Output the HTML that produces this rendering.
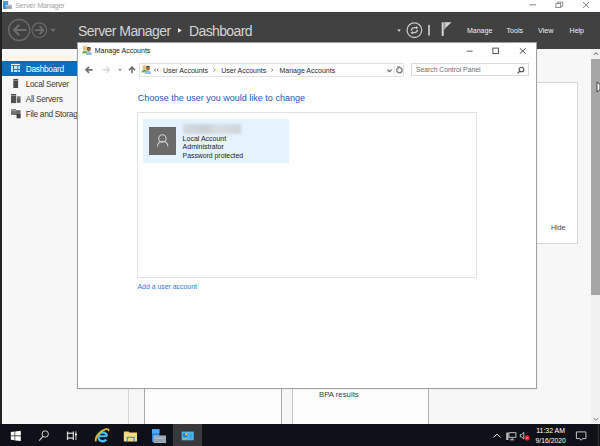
<!DOCTYPE html>
<html><head><meta charset="utf-8">
<style>
*{box-sizing:border-box}
html,body{margin:0;padding:0}
body{width:600px;height:446px;overflow:hidden;position:relative;background:#f7f7f7;font-family:"Liberation Sans",sans-serif;color:#222}
.a{position:absolute}
.t{position:absolute;white-space:nowrap;line-height:1.117}
svg{position:absolute;overflow:visible}
</style></head><body>

<!-- left dark edge -->
<div class="a" style="left:0;top:0;width:2px;height:424px;background:#232323"></div>
<div class="a" style="left:2px;top:11px;width:1px;height:413px;background:#fff"></div>

<!-- server manager title bar -->
<div class="a" style="left:2px;top:0;width:598px;height:11.5px;background:#fff"></div>
<svg style="left:0;top:0" width="16" height="12">
  <rect x="3.2" y="1" width="4.9" height="8" fill="#1f80de"/>
  <rect x="3.2" y="1" width="4.9" height="3" fill="#4a9be8"/>
  <rect x="5.2" y="4.8" width="6.6" height="4.1" fill="#8ea3b6"/>
  <rect x="5.2" y="4.8" width="6.6" height="1.3" fill="#c3ccd4"/>
</svg>
<div class="t" style="left:15.2px;top:1.6px;font-size:7.3px;color:#a3a3a3;letter-spacing:-0.22px">Server Manager</div>
<svg style="left:520px;top:0" width="80" height="12">
  <line x1="9.3" y1="4.8" x2="16" y2="4.8" stroke="#777" stroke-width="0.9"/>
  <rect x="35.9" y="3.4" width="4.8" height="4.2" fill="none" stroke="#777" stroke-width="0.8"/>
  <path d="M37.3 3.4 V2.1 H42.7 V6.3 H40.7" fill="none" stroke="#777" stroke-width="0.8"/>
  <path d="M63 2 L69 7.8 M69 2 L63 7.8" stroke="#777" stroke-width="0.9"/>
</svg>

<!-- header -->
<div class="a" style="left:2px;top:11.5px;width:598px;height:37px;background:#414141"></div>
<svg style="left:0;top:12px" width="70" height="36">
  <circle cx="19.2" cy="18" r="10.5" fill="none" stroke="#6a6a6a" stroke-width="1.35"/>
  <path d="M14 18 H26.4 M19.2 12.8 L14 18 L19.2 23.2" fill="none" stroke="#6e6e6e" stroke-width="2"/>
  <circle cx="39.3" cy="18.2" r="7.3" fill="none" stroke="#6a6a6a" stroke-width="1.2"/>
  <path d="M34.6 18.2 H43 M39.6 14.2 L43.4 18.2 L39.6 22.2" fill="none" stroke="#6e6e6e" stroke-width="1.7"/>
  <path d="M50 16.8 H56 L53 20 Z" fill="#6c6c6c"/>
</svg>
<div class="t" style="left:78px;top:24.1px;font-size:14px;color:#d4d4d4;letter-spacing:-0.55px">Server Manager</div>
<svg style="left:170px;top:20px" width="20" height="20">
  <path d="M8 8 L11.8 10.4 L8 12.8 Z" fill="#e8e8e8"/>
</svg>
<div class="t" style="left:189px;top:24.1px;font-size:14px;color:#d4d4d4;letter-spacing:-0.62px">Dashboard</div>

<svg style="left:390px;top:12px" width="70" height="36">
  <path d="M7.2 17.4 H10.8 L9 19.8 Z" fill="#e0e0e0"/>
  <circle cx="24.4" cy="18.2" r="7.3" fill="none" stroke="#c4c4c4" stroke-width="1.3"/>
  <path d="M21.2 18.6 C21.6 16.6 23 15.7 25 15.7 H26.4 M27.6 17.8 C27.2 19.8 25.8 20.7 23.8 20.7 H22.4" fill="none" stroke="#c8c8c8" stroke-width="1.3"/>
  <path d="M25.9 13.9 L28.3 15.7 L25.9 17.5 Z M22.9 18.9 L20.5 20.7 L22.9 22.5 Z" fill="#c8c8c8"/>
  <rect x="38.1" y="12.9" width="1.8" height="10.6" fill="#c4c4c4"/>
  <rect x="51.7" y="10.3" width="2" height="13.6" fill="#d4d4d4"/>
  <path d="M53.7 10.3 H61.5 L53.7 17.8 Z" fill="#d4d4d4"/>
  <rect x="53.7" y="10.3" width="1.6" height="7" fill="#9a9a9a"/>
</svg>

<!-- header menu -->
<div class="t" style="left:467px;top:27.2px;font-size:7px;color:#f2f2f2">Manage</div>
<div class="t" style="left:506.6px;top:27.2px;font-size:7px;color:#f2f2f2">Tools</div>
<div class="t" style="left:538px;top:27.2px;font-size:7.2px;color:#f2f2f2">View</div>
<div class="t" style="left:569.6px;top:27.2px;font-size:7px;color:#f2f2f2">Help</div>

<!-- nav -->
<div class="a" style="left:2px;top:60.8px;width:76px;height:14.8px;background:#0a6ebd"></div>
<svg style="left:0;top:60px" width="26" height="60">
  <rect x="11" y="3.9" width="9" height="1.3" fill="#fff"/>
  <g fill="#cfe0f2">
  <rect x="11" y="6" width="2.1" height="6"/>
  <rect x="14" y="6" width="3.4" height="3.1"/><rect x="14" y="10" width="3.4" height="2"/>
  <rect x="18.2" y="6" width="1.8" height="3.1"/><rect x="18.2" y="10" width="1.8" height="2"/>
  </g>
  <!-- local server -->
  <rect x="13.3" y="18.9" width="4.8" height="9.1" fill="#4a4a4a"/>
  <rect x="13.3" y="20" width="4.8" height="0.8" fill="#9a9a9a"/>
  <!-- all servers -->
  <rect x="11" y="34" width="5.1" height="9.1" fill="#505050"/>
  <rect x="11" y="35.2" width="5.1" height="0.8" fill="#a0a0a0"/>
  <rect x="16.8" y="36.4" width="3.7" height="6.4" fill="#5a5a5a"/>
  <rect x="16.8" y="37.6" width="3.7" height="0.7" fill="#a8a8a8"/>
  <!-- file and storage -->
  <rect x="11" y="49.2" width="5" height="5.8" fill="#707070"/>
  <rect x="11" y="50.4" width="5" height="0.8" fill="#b0b0b0"/>
  <rect x="16" y="50.2" width="4.5" height="5" fill="#6a6a6a"/>
  <rect x="16.6" y="54" width="4" height="4.3" fill="#404040"/>
</svg>
<div class="t" style="left:25.7px;top:64.7px;font-size:8.3px;letter-spacing:-0.27px;color:#fff">Dashboard</div>
<div class="t" style="left:25.7px;top:79.9px;font-size:8.3px;letter-spacing:-0.3px;color:#3a3a3a">Local Server</div>
<div class="t" style="left:25.7px;top:95.2px;font-size:8.3px;letter-spacing:-0.3px;color:#3a3a3a">All Servers</div>
<div class="t" style="left:25.7px;top:110.3px;font-size:8.3px;letter-spacing:-0.3px;color:#3a3a3a">File and Storage Services</div>

<!-- right content panel -->
<div class="a" style="left:128px;top:81.5px;width:450px;height:162.7px;background:#fff;border:1px solid #d6d6d6"></div>
<div class="t" style="left:551px;top:224.4px;font-size:7px;color:#444">Hide</div>

<!-- bottom tiles -->
<div class="a" style="left:128px;top:380px;width:1px;height:44px;background:#d4d4d4"></div>
<div class="a" style="left:129px;top:380px;width:15px;height:44px;background:#f6f6f6"></div>
<div class="a" style="left:144px;top:380px;width:138px;height:44px;background:#fcfcfc;border-left:1px solid #a8a8a8;border-right:1px solid #a8a8a8"></div>
<div class="a" style="left:282px;top:380px;width:10px;height:44px;background:#f6f6f6"></div>
<div class="a" style="left:292px;top:380px;width:137px;height:44px;background:#fcfcfc;border-left:1px solid #c8c8c8;border-right:1px solid #b0b0b0"></div>
<div class="t" style="left:319px;top:390.5px;font-size:7.8px;color:#444">BPA results</div>

<!-- scrollbar -->
<div class="a" style="left:590.5px;top:48.5px;width:9.5px;height:375.5px;background:#f0f0f0"></div>
<div class="a" style="left:590.5px;top:59px;width:9.5px;height:235.8px;background:#a6a6a6"></div>
<svg style="left:586px;top:46px" width="14" height="380">
  <path d="M7.8 8.9 L9.9 6.6 L12 8.9" fill="none" stroke="#606060" stroke-width="1"/>
  <path d="M7.6 372 L9.8 374.4 L12 372" fill="none" stroke="#808080" stroke-width="1"/>
  <path d="M11 36 L14 38.5 V43.5 L11 46 Z" fill="#fff" stroke="#333" stroke-width="0.9"/>
</svg>

<!-- dialog -->
<div class="a" style="left:77px;top:42px;width:460px;height:347px;background:#fff;border:1px solid #a2a2a2;box-shadow:0 0 1px rgba(0,0,0,.2)"></div>
<svg style="left:80px;top:43px" width="16" height="14">
  <path d="M2.1 10.6 Q2.2 7.5 5 7.4 Q7.8 7.5 7.9 10.6 Z" fill="#74b257"/>
  <ellipse cx="5" cy="5.2" rx="2.1" ry="2.4" fill="#e6c28c"/>
  <path d="M2.9 5 Q2.8 2.6 5 2.6 Q7.2 2.6 7.1 5 Q6.6 3.9 5 3.9 Q3.4 3.9 2.9 5 Z" fill="#dccf86"/>
  <path d="M5.9 12.1 Q6 8.7 8.9 8.6 Q11.8 8.7 11.9 12.1 Z" fill="#8fbee9"/>
  <ellipse cx="8.8" cy="6.3" rx="2" ry="2.3" fill="#a46c38"/>
  <path d="M6.8 6.1 Q6.7 3.8 8.8 3.8 Q10.9 3.8 10.8 6.1 Q10.3 5 8.8 5 Q7.3 5 6.8 6.1 Z" fill="#474747"/>
</svg>
<div class="t" style="left:94.7px;top:47px;font-size:7px;color:#222">Manage Accounts</div>
<svg style="left:455px;top:38px" width="90" height="22">
  <line x1="11.7" y1="13.2" x2="17.7" y2="13.2" stroke="#555" stroke-width="0.9"/>
  <rect x="37.9" y="10.1" width="5.5" height="5.5" fill="none" stroke="#444" stroke-width="0.9"/>
  <path d="M64.8 10.2 L70.8 15.7 M70.8 10.2 L64.8 15.7" stroke="#444" stroke-width="0.9"/>
</svg>

<!-- nav row -->
<svg style="left:80px;top:60px" width="80" height="20">
  <path d="M6 9.8 H12.7 M9 6.8 L6 9.8 L9 12.8" fill="none" stroke="#707070" stroke-width="1.7"/>
  <path d="M22.7 9.8 H29.4 M26.4 6.8 L29.4 9.8 L26.4 12.8" fill="none" stroke="#dadada" stroke-width="1.6"/>
  <path d="M38.5 9 L40.1 10.5 L41.7 9" fill="none" stroke="#5a5a5a" stroke-width="1"/>
  <path d="M52 7.2 V13.3 M48.9 10.2 L52 7.1 L55.1 10.2" fill="none" stroke="#686868" stroke-width="1.5"/>
</svg>

<!-- address bar -->
<div class="a" style="left:139px;top:63.2px;width:265px;height:13.4px;border:1px solid #e2e2e2"></div>
<div class="a" style="left:393.5px;top:63.2px;width:1px;height:13.4px;background:#eaeaea"></div>
<svg style="left:140px;top:63px" width="20" height="14">
  <path d="M1.6 9.4 Q1.7 6.4 4.5 6.3 Q7.2 6.4 7.4 9.4 Z" fill="#74b257"/>
  <ellipse cx="4.5" cy="4.2" rx="2" ry="2.3" fill="#e6c28c"/>
  <path d="M2.5 4 Q2.4 1.7 4.5 1.7 Q6.6 1.7 6.5 4 Q6 2.9 4.5 2.9 Q3 2.9 2.5 4 Z" fill="#dccf86"/>
  <path d="M5.2 10.9 Q5.3 7.5 8.1 7.4 Q10.9 7.5 11 10.9 Z" fill="#8fbee9"/>
  <ellipse cx="8" cy="5.2" rx="1.9" ry="2.2" fill="#a46c38"/>
  <path d="M6.1 5 Q6 2.8 8 2.8 Q10 2.8 9.9 5 Q9.4 4 8 4 Q6.6 4 6.1 5 Z" fill="#474747"/>
  <path d="M15.9 5.7 L14.4 7 L15.9 8.3 M18.4 5.7 L16.9 7 L18.4 8.3" fill="none" stroke="#6a6a6a" stroke-width="0.9"/>
</svg>
<div class="t" style="left:162.9px;top:66.5px;font-size:7px;color:#2a2a2a">User Accounts</div>
<svg style="left:205px;top:63px" width="80" height="14">
  <path d="M8.5 5.5 L10.3 7 L8.5 8.5" fill="none" stroke="#777" stroke-width="0.8"/>
  <path d="M66.2 5.5 L68 7 L66.2 8.5" fill="none" stroke="#777" stroke-width="0.8"/>
</svg>
<div class="t" style="left:221.2px;top:66.5px;font-size:7px;color:#2a2a2a">User Accounts</div>
<div class="t" style="left:279.5px;top:66.5px;font-size:7px;color:#2a2a2a">Manage Accounts</div>
<svg style="left:380px;top:60px" width="30" height="20">
  <path d="M7.4 9.6 L9.5 11.7 L11.6 9.6" fill="none" stroke="#666" stroke-width="1.3"/>
  <path d="M17.6 8.2 A2.7 2.7 0 1 0 20.2 7.6" fill="none" stroke="#777" stroke-width="1.3"/>
  <path d="M17 6.2 L20.4 6.6 L18.6 9.4 Z" fill="#777"/>
</svg>

<!-- search -->
<div class="a" style="left:411.3px;top:63.3px;width:117.3px;height:12.8px;border:1px solid #dadada"></div>
<div class="t" style="left:415.9px;top:66px;font-size:6.8px;color:#6d6d6d">Search Control Panel</div>
<svg style="left:505px;top:60px" width="30" height="20">
  <circle cx="16.5" cy="9.5" r="2.3" fill="none" stroke="#555" stroke-width="1.1"/>
  <path d="M14.8 11.2 L12.5 13.4" stroke="#555" stroke-width="1.3"/>
</svg>

<!-- heading -->
<div class="t" style="left:137.8px;top:92.9px;font-size:9px;color:#2457be">Choose the user you would like to change</div>

<!-- users box -->
<div class="a" style="left:137px;top:112px;width:340px;height:166px;border:1px solid #e3e3e3"></div>
<div class="a" style="left:142.8px;top:118.6px;width:146.2px;height:44.4px;background:#e5f3ff"></div>
<div class="a" style="left:148.6px;top:126.7px;width:27.9px;height:28.2px;background:#6a6a6a"></div>
<svg style="left:146px;top:124px" width="34" height="34">
  <circle cx="16.4" cy="14.4" r="3.7" fill="none" stroke="#d0d0d0" stroke-width="1.1"/>
  <path d="M11.5 22.4 A5.1 5.1 0 0 1 21.9 22.4" fill="none" stroke="#d0d0d0" stroke-width="1.1"/>
</svg>
<div class="a" style="left:183px;top:123.5px;width:58px;height:10px;background:linear-gradient(90deg,#d4dadf,#cbd1d7 40%,#d8dde2 60%,#ced4da);filter:blur(1.6px)"></div>
<div class="t" style="left:182.6px;top:134.8px;font-size:7px;color:#222">Local Account</div>
<div class="t" style="left:182.6px;top:143.2px;font-size:7px;color:#222">Administrator</div>
<div class="t" style="left:182.6px;top:152.2px;font-size:6.85px;color:#222">Password protected</div>

<div class="t" style="left:137.5px;top:282.6px;font-size:6.9px;color:#2f7ad6">Add a user account</div>

<!-- taskbar -->
<div class="a" style="left:0;top:424.3px;width:600px;height:22px;background:#0e1117"></div>
<div class="a" style="left:173.3px;top:424.3px;width:28.5px;height:22px;background:#39393c"></div>
<svg style="left:0;top:424px" width="600" height="22">
  <!-- windows logo -->
  <path d="M10.8 8 L14.6 7.5 V11.6 H10.8 Z M15.2 7.4 L20.8 6.7 V11.6 H15.2 Z M10.8 12.2 H14.6 V16.3 L10.8 15.8 Z M15.2 12.2 H20.8 V17 L15.2 16.4 Z" fill="#fff"/>
  <!-- search -->
  <circle cx="45.2" cy="10" r="3.2" fill="none" stroke="#d0d0d0" stroke-width="1"/>
  <path d="M42.9 12.3 L39.3 16.6" stroke="#d0d0d0" stroke-width="1.1"/>
  <!-- task view -->
  <g fill="#cfcfcf">
    <rect x="66.9" y="7.5" width="1.3" height="8.5"/>
    <rect x="72.7" y="7.5" width="1.3" height="8.5"/>
    <rect x="66.9" y="8.6" width="7.1" height="1.3"/>
    <rect x="66.9" y="13.4" width="7.1" height="1.3"/>
    <rect x="75.4" y="7.3" width="1" height="8.7"/>
  </g>
  <circle cx="75.9" cy="10.5" r="1" fill="#fff"/>
  <!-- IE -->
  <path d="M106.2 15.6 A4.4 4.4 0 1 1 107 12" fill="none" stroke="#48bbf0" stroke-width="2.5"/>
  <rect x="98" y="11.2" width="9.2" height="2" fill="#48bbf0"/>
  <path d="M95.8 17.4 C 94.8 12.8, 99.5 6.8, 106 5.2 C 108.6 4.6, 109 5.8, 108.3 7.2" fill="none" stroke="#e8b828" stroke-width="1.7"/>
  <!-- folder -->
  <path d="M123.9 7.5 H128.5 L129.5 8.5 H136.9 V17.3 H123.9 Z" fill="#f6d272"/>
  <rect x="123.9" y="9.3" width="13" height="8" fill="#fbdc86"/>
  <path d="M126.6 17.3 V12.8 H134.7 V17.3 H133.4 V14.1 H127.9 V17.3 Z" fill="#2ba0e6"/>
  <!-- server manager -->
  <rect x="152" y="5.2" width="7.4" height="12.6" fill="#2a86de"/>
  <rect x="152" y="5.2" width="7.4" height="4" fill="#56a6ee"/>
  <rect x="154" y="11.9" width="11.7" height="6.8" fill="#8ea2b4" stroke="#c8d0d8" stroke-width="0.6"/>
  <rect x="155.5" y="13.6" width="8.5" height="1.2" fill="#b8c4ce"/>
  <!-- control panel -->
  <rect x="181.7" y="7.6" width="12" height="8.7" fill="#4db6f0"/>
  <circle cx="185.2" cy="11.2" r="2.4" fill="#2a7fc8"/>
  <path d="M185.2 11.2 V8.8 A2.4 2.4 0 0 1 187.6 11.2 Z" fill="#f4c23c"/>
  <rect x="183" y="14.3" width="3.2" height="0.9" fill="#d8c040"/>
  <rect x="189.5" y="9.5" width="2.5" height="5" fill="#2f98dc" opacity="0.6"/>
  <!-- tray caret -->
  <path d="M493.4 13.5 L497 10.1 L500.6 13.5" fill="none" stroke="#d0d0d0" stroke-width="1"/>
  <!-- network -->
  <rect x="506.2" y="8.6" width="2.2" height="7.4" fill="#bdbdbd"/>
  <rect x="508.9" y="8.7" width="7" height="4.6" fill="#0e1117" stroke="#d0d0d0" stroke-width="0.9"/>
  <path d="M512.2 13.8 V15.6 M509.8 15.8 H514.2" fill="none" stroke="#d0d0d0" stroke-width="0.9"/>
  <!-- volume -->
  <path d="M520.3 10.5 H521.6 L523.8 8.3 V15 L521.6 12.9 H520.3 Z" fill="none" stroke="#cfcfcf" stroke-width="0.9"/>
  <circle cx="527.1" cy="13.9" r="2.6" fill="#e3202c"/>
  <path d="M526.2 13 L528 14.8 M528 13 L526.2 14.8" stroke="#ffb0b0" stroke-width="0.6"/>
  <!-- action center -->
  <path d="M576.4 7.9 H585.9 V14.6 H582.5 L581.2 16.3 L579.9 14.6 H576.4 Z" fill="none" stroke="#d6d6d6" stroke-width="0.9"/>
  <rect x="597.9" y="0" width="0.9" height="22" fill="#3a3a3a"/>
</svg>
<div class="t" style="left:536.3px;top:426.9px;font-size:6.9px;color:#fff">11:32 AM</div>
<div class="t" style="left:535.6px;top:436.6px;font-size:6.8px;color:#fff">9/16/2020</div>

</body></html>
